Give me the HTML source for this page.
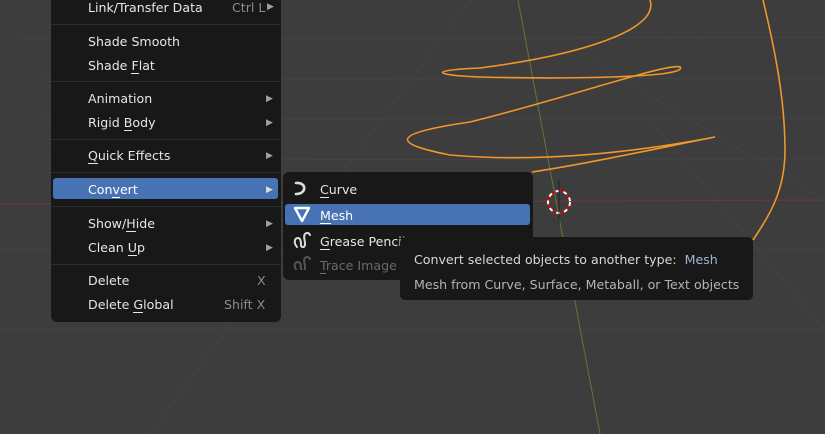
<!DOCTYPE html>
<html><head><style>
body{margin:0;width:825px;height:434px;overflow:hidden;background:#3d3d3d;font-family:"DejaVu Sans",sans-serif;font-size:12.6px;position:relative}
.abs{position:absolute}
.menu{background:#181818;border-radius:0 0 6px 6px}
.item{position:absolute;left:37px;color:#e6e6e6;white-space:nowrap}
.sc{position:absolute;color:#8c8c8c;white-space:nowrap}
.arr{position:absolute;left:215px;color:#a0a0a0;font-size:9px}
.sep{position:absolute;left:0;width:230px;height:1px;background:#2c2c2c}
u{text-decoration:none;border-bottom:1px solid currentColor}
</style></head><body>
<svg class="abs" style="left:0;top:0" width="825" height="434">
<g stroke="#444" stroke-width="1" fill="none">
<line x1="0" y1="40" x2="825" y2="37"/><line x1="0" y1="80" x2="825" y2="78"/><line x1="0" y1="120" x2="825" y2="118"/><line x1="0" y1="160" x2="825" y2="159"/><line x1="0" y1="250" x2="825" y2="250"/><line x1="0" y1="330" x2="825" y2="330"/>
<line x1="470" y1="0" x2="150" y2="434"/><line x1="590" y1="60" x2="825" y2="200"/><line x1="650" y1="120" x2="825" y2="330"/>
</g>
<line x1="0" y1="204" x2="825" y2="200" stroke="#6a3a3e" stroke-width="1"/>
<line x1="518" y1="0" x2="600" y2="434" stroke="#5d7a34" stroke-width="1"/>
<g stroke="#f0962a" stroke-width="1.6" fill="none">
<path d="M650,0 C660,30 580,55 480,68 C430,70 430,75 480,77 C560,79 690,78 680,67 C670,62 560,100 470,122 C380,135 400,145 450,155 C530,162 620,155 715,137 C650,150 580,165 532,172"/>
<path d="M763,0 C775,50 785,100 785,150 C785,190 770,215 753,240"/>
</g>
<circle cx="559" cy="202" r="11" fill="none" stroke="#fff" stroke-width="2" stroke-dasharray="4 4"/>
<circle cx="559" cy="202" r="11" fill="none" stroke="#d00" stroke-width="2" stroke-dasharray="4 4" stroke-dashoffset="4"/>
<line x1="559" y1="180" x2="559" y2="224" stroke="#222" stroke-width="1"/>
</svg>
<div class="abs menu" style="left:51px;top:0;width:230px;height:322px">
<div class="item" style="top:0">Link/Transfer Data</div><div class="sc" style="left:181px;top:0">Ctrl L</div><div class="arr" style="top:2px;left:216px">▶</div>
<div class="sep" style="top:24px"></div>
<div class="item" style="top:34px">Shade Smooth</div>
<div class="item" style="top:58px">Shade <u>F</u>lat</div>
<div class="sep" style="top:81px"></div>
<div class="item" style="top:91px">Animation</div><div class="arr" style="top:94px">▶</div>
<div class="item" style="top:115px">Rigid <u>B</u>ody</div><div class="arr" style="top:118px">▶</div>
<div class="sep" style="top:139px"></div>
<div class="item" style="top:148px"><u>Q</u>uick Effects</div><div class="arr" style="top:151px">▶</div>
<div class="sep" style="top:172px"></div>
<div class="abs" style="left:2px;top:178px;width:225px;height:21px;background:#4772b3;border-radius:3px"></div>
<div class="item" style="top:182px;color:#fff">Con<u>v</u>ert</div><div class="arr" style="top:185px;color:#ddd">▶</div>
<div class="sep" style="top:206px"></div>
<div class="item" style="top:216px">Show/<u>H</u>ide</div><div class="arr" style="top:219px">▶</div>
<div class="item" style="top:240px">Clean <u>U</u>p</div><div class="arr" style="top:243px">▶</div>
<div class="sep" style="top:264px"></div>
<div class="item" style="top:273px">Delete</div><div class="sc" style="left:206px;top:273px">X</div>
<div class="item" style="top:297px">Delete <u>G</u>lobal</div><div class="sc" style="left:173px;top:297px">Shift X</div>
</div>
<div class="abs menu" style="left:283px;top:172px;width:250px;height:108px;border-radius:6px">
<div class="abs" style="left:2px;top:32px;width:245px;height:21px;background:#4772b3;border-radius:3px"></div>
<svg class="abs" style="left:10px;top:8px" width="20" height="90">
<path d="M3,3 C14,2 14,14 3,14" fill="none" stroke="#ddd" stroke-width="2.6" stroke-linecap="round"/>
<path d="M2,28 L16,28 L9,41 Z" fill="none" stroke="#fff" stroke-width="2.4" stroke-linejoin="round"/>
<path d="M4,67 C0,62 2,58 5,58 C8,58 8,63 8,65 C8,68 12,68 12,64 C12,60 10,56 12,54 C14,52 16,53 17,55" fill="none" stroke="#ddd" stroke-width="2" stroke-linecap="round"/>
<path d="M4,91 C0,86 2,82 5,82 C8,82 8,87 8,89 C8,92 12,92 12,88 C12,84 10,80 12,78 C14,76 16,77 17,79" fill="none" stroke="#555" stroke-width="2" stroke-linecap="round"/>
</svg>
<div class="item" style="left:37px;top:10px"><u>C</u>urve</div>
<div class="item" style="left:37px;top:36px;color:#fff"><u>M</u>esh</div>
<div class="item" style="left:37px;top:62px"><u>G</u>rease Pencil</div>
<div class="item" style="left:37px;top:86px;color:#6a6a6a"><u>T</u>race Image</div>
</div>
<div class="abs" style="left:400px;top:237px;width:353px;height:63px;background:#181818;border-radius:5px">
<div class="abs" style="left:14px;top:15px;color:#d8d8d8;white-space:nowrap">Convert selected objects to another type: &nbsp;<span style="color:#9fb4d4">Mesh</span></div>
<div class="abs" style="left:14px;top:40px;color:#b4b4b4;white-space:nowrap">Mesh from Curve, Surface, Metaball, or Text objects</div>
</div>
</body></html>
